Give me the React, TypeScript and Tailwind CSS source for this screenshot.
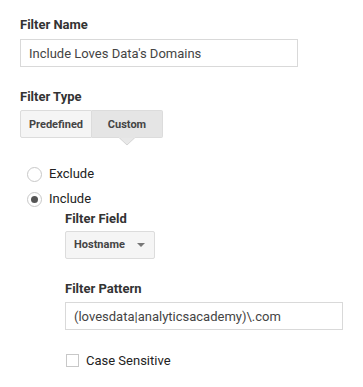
import { useState } from 'react';

const font = { fontFamily: 'Roboto, "Liberation Sans", sans-serif' };

const Label = ({ children }: { children: string }) => (
  <div className="text-[13px] font-bold leading-4 text-[#333]">{children}</div>
);

const Radio = ({ checked, label, onClick }: { checked: boolean; label: string; onClick: () => void }) => (
  <button onClick={onClick} className="flex h-[20px] items-center gap-[7px] text-[13px] text-[#222]">
    <span className="flex h-[15px] w-[15px] items-center justify-center rounded-full border border-[#c8c8c8] bg-white">
      {checked && <span className="h-[7px] w-[7px] rounded-full bg-[#555]" />}
    </span>
    {label}
  </button>
);

const App = () => {
  const [type, setType] = useState<'predefined' | 'custom'>('custom');
  const [mode, setMode] = useState<'exclude' | 'include'>('include');
  const [caseSensitive, setCaseSensitive] = useState(false);

  return (
    <div className="min-h-[387px] w-[363px] bg-white pl-[20px] pt-[17px]" style={font}>
      <Label>Filter Name</Label>
      <input
        className="mt-[6px] h-[28px] w-[278px] border border-[#d9d9d9] px-[8px] text-[13px] text-[#444] outline-none"
        defaultValue="Include Loves Data's Domains"
      />

      <div className="mt-[22px]">
        <Label>Filter Type</Label>
      </div>
      <div className="relative mt-[5px] flex w-[143px]">
        <button
          onClick={() => setType('predefined')}
          className={`h-[28px] w-[72px] rounded-l-[2px] border border-[#dcdcdc] pt-[3px] text-[11px] font-bold text-[#444] ${type === 'predefined' ? 'bg-[#e5e5e5]' : 'bg-[#f5f5f5]'}`}
        >
          Predefined
        </button>
        <button
          onClick={() => setType('custom')}
          className={`h-[28px] w-[71px] rounded-r-[2px] border border-l-0 border-[#dcdcdc] pt-[3px] text-[11px] font-bold text-[#444] ${type === 'custom' ? 'bg-[#e5e5e5]' : 'bg-[#f5f5f5]'}`}
        >
          Custom
        </button>
        <svg className="absolute left-[99px] top-[27px]" width="16" height="9" viewBox="0 0 16 9">
          <path d="M0 0.5 L8 8 L16 0.5" fill="#e8e8e8" stroke="#d4d4d4" />
          <rect x="0" y="0" width="16" height="1" fill="#e5e5e5" />
        </svg>
      </div>

      <div className="mt-[26px] flex flex-col gap-[5px] pl-[7px]">
        <Radio checked={mode === 'exclude'} label="Exclude" onClick={() => setMode('exclude')} />
        <Radio checked={mode === 'include'} label="Include" onClick={() => setMode('include')} />
      </div>

      <div className="pl-[45px]">
        <div className="mt-[2px]">
          <Label>Filter Field</Label>
        </div>
        <button className="mt-[4px] flex h-[28px] w-[90px] items-center justify-between rounded-[2px] border border-[#dcdcdc] bg-[#f5f5f5] pl-[8px] pr-[9px] text-[11px] font-bold text-[#444]">
          Hostname
          <svg width="8" height="4" viewBox="0 0 8 4">
            <path d="M0 0 L8 0 L4 4 Z" fill="#777" />
          </svg>
        </button>

        <div className="mt-[22px]">
          <Label>Filter Pattern</Label>
        </div>
        <input
          className="mt-[5px] h-[28px] w-[278px] border border-[#d9d9d9] px-[8px] text-[13px] text-[#444] outline-none"
          defaultValue="(lovesdata|analyticsacademy)\.com"
        />

        <button
          onClick={() => setCaseSensitive(!caseSensitive)}
          className="mt-[21px] flex items-center gap-[7px] pl-[1px] text-[13px] text-[#222]"
        >
          <span className="flex h-[13px] w-[13px] items-center justify-center border border-[#c8c8c8] bg-white text-[10px] leading-none">
            {caseSensitive ? '✓' : ''}
          </span>
          Case Sensitive
        </button>
      </div>
    </div>
  );
};

export default App;
